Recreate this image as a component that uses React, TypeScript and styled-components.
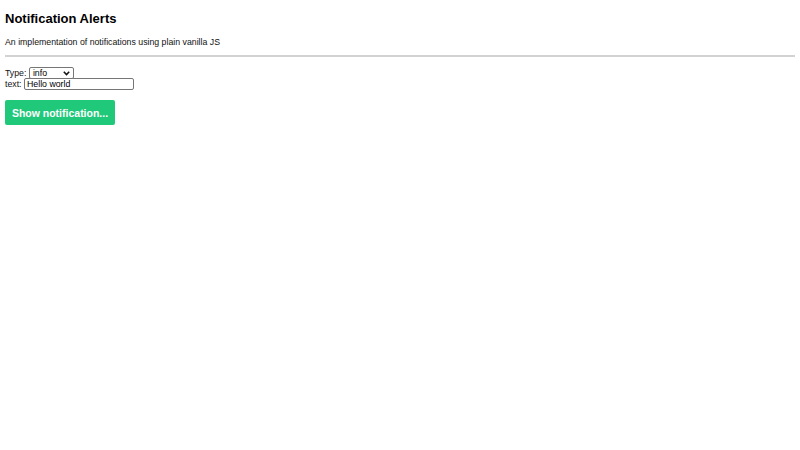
import { useState } from "react";
import styled, { createGlobalStyle } from "styled-components";

const GlobalStyle = createGlobalStyle`
  html, body {
    margin: 0;
    padding: 0;
    background: #ffffff;
  }
  body {
    font-family: "Liberation Sans", Arial, sans-serif;
    color: #000000;
  }
`;

const Page = styled.main`
  padding: 0 5px;
`;

const Title = styled.h3`
  margin: 11px 0 0;
  font-size: 13px;
  line-height: 15px;
  font-weight: bold;
`;

const Intro = styled.p`
  margin: 10.6px 0 0;
  font-size: 8.75px;
  line-height: 10px;
  color: #111111;
`;

const Divider = styled.hr`
  margin: 8.7px 0 0;
  border: 0;
  border-top: 2px solid #d2d2d2;
  height: 0;
`;

const Form = styled.form`
  display: flex;
  flex-direction: column;
  margin-top: 10px;
`;

const Row = styled.label<{ $height: number }>`
  display: flex;
  align-items: center;
  gap: 2.5px;
  height: ${({ $height }) => $height}px;
  font-size: 8.75px;
  line-height: 10px;
  color: #111111;
`;

const SelectWrap = styled.span`
  position: relative;
  display: inline-flex;
`;

const Select = styled.select`
  box-sizing: border-box;
  appearance: none;
  width: 45px;
  height: 11.5px;
  padding: 1px 0 0 3px;
  font-family: "Liberation Sans", Arial, sans-serif;
  font-size: 8.75px;
  line-height: 9px;
  border: 1px solid #767676;
  border-radius: 2px;
  background: #ffffff;
  color: #000000;
  outline: none;
`;

const Chevron = styled.svg`
  position: absolute;
  right: 4px;
  top: 3.5px;
  width: 7px;
  height: 5px;
  pointer-events: none;
`;

const TextInput = styled.input`
  box-sizing: border-box;
  width: 110px;
  height: 12px;
  padding: 0 2px;
  font-family: "Liberation Sans", Arial, sans-serif;
  font-size: 8.75px;
  border: 1px solid #767676;
  border-radius: 2px;
  color: #000000;
  outline: none;
`;

const ShowButton = styled.button`
  align-self: flex-start;
  box-sizing: border-box;
  width: 110px;
  height: 25px;
  margin-top: 10px;
  padding: 0;
  border: 0;
  border-radius: 2px;
  background: #20c87a;
  color: #ffffff;
  font-family: "Liberation Sans", Arial, sans-serif;
  font-size: 10.5px;
  font-weight: bold;
  white-space: nowrap;
  text-align: center;
  cursor: pointer;
`;

export default function App() {
  const [type, setType] = useState("info");
  const [text, setText] = useState("Hello world");

  return (
    <Page>
      <GlobalStyle />
      <Title>Notification Alerts</Title>
      <Intro>An implementation of notifications using plain vanilla JS</Intro>
      <Divider />
      <Form onSubmit={(e) => e.preventDefault()}>
        <Row $height={11}>
          Type:
          <SelectWrap>
            <Select value={type} onChange={(e) => setType(e.target.value)}>
              <option value="info">info</option>
              <option value="success">success</option>
              <option value="warning">warning</option>
              <option value="error">error</option>
            </Select>
            <Chevron viewBox="0 0 7 5" aria-hidden="true">
              <path
                d="M0.8 0.8 L3.5 3.6 L6.2 0.8"
                fill="none"
                stroke="#111111"
                strokeWidth="1.5"
              />
            </Chevron>
          </SelectWrap>
        </Row>
        <Row $height={12}>
          text:
          <TextInput value={text} onChange={(e) => setText(e.target.value)} />
        </Row>
        <ShowButton type="submit">Show notification...</ShowButton>
      </Form>
    </Page>
  );
}
